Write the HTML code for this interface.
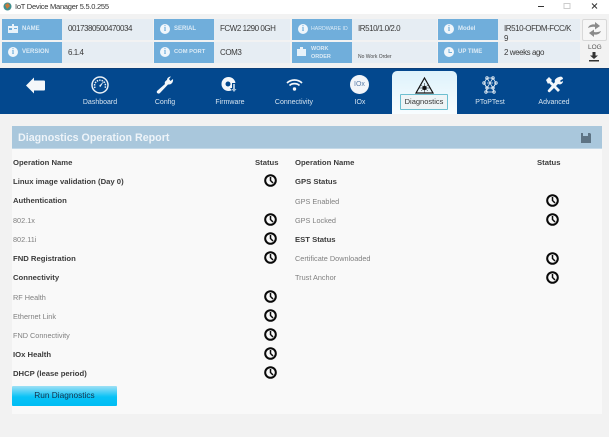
<!DOCTYPE html>
<html><head><meta charset="utf-8"><style>
html,body{margin:0;padding:0}
body{width:609px;height:437px;position:relative;overflow:hidden;background:#f2f2f2;font-family:"Liberation Sans",sans-serif;color:#333}
.a{position:absolute;white-space:nowrap}
.l{position:absolute;background:#70aedb;height:21px;width:60px}
.v{position:absolute;background:#e6edf3;height:21px}
.lt{position:absolute;color:#dcebf6;font-size:6px;font-weight:bold;white-space:nowrap}
.vt{position:absolute;color:#3a3a3a;font-size:8px;letter-spacing:-.45px;line-height:10px;white-space:nowrap}
.i{position:absolute;width:10px;height:10px;border-radius:50%;background:#f0f6fb;color:#70aedb;font:bold 8px/10px "Liberation Serif",serif;text-align:center}
.n{position:absolute;top:98px;width:70px;text-align:center;color:#d5e3ef;font-size:7px;line-height:9px}
.r{position:absolute;font-size:7.300px;line-height:10px;white-space:nowrap;color:#808080}
.b{color:#3c3c3c;font-weight:bold;font-size:7.700px}
svg{position:absolute;overflow:visible}
</style></head><body>
<div class="a" style="left:0;top:0;width:609px;height:14px;background:#fff"></div>
<svg style="left:3px;top:2px" width="9" height="9" viewBox="0 0 9 9"><circle cx="4.500" cy="4.500" r="4" fill="#3f8f8f"/><path d="M2 3l3-2 2 3-3 3z" fill="#c87a3a"/></svg>
<div class="a" style="left:15px;top:2px;font-size:7.500px;letter-spacing:-.25px;line-height:10px;color:#333">IoT Device Manager 5.5.0.255</div>
<svg style="left:538px;top:3px" width="62" height="9" viewBox="0 0 62 9"><path d="M0 3.500h6" stroke="#333" fill="none"/><rect x="26" y="0.500" width="6" height="5" fill="none" stroke="#ccc"/><path d="M54 0.500l5 5M59 0.500l-5 5" stroke="#333" fill="none"/></svg>

<div class="l" style="left:2px;top:19px"></div><div class="v" style="left:62px;top:19px;width:91px"></div>
<div class="l" style="left:154px;top:19px"></div><div class="v" style="left:214px;top:19px;width:76px"></div>
<div class="l" style="left:292px;top:19px"></div><div class="v" style="left:352px;top:19px;width:85px"></div>
<div class="l" style="left:438px;top:19px"></div><div class="v" style="left:498px;top:19px;width:82px"></div>
<div class="l" style="left:2px;top:42px"></div><div class="v" style="left:62px;top:42px;width:91px"></div>
<div class="l" style="left:154px;top:42px"></div><div class="v" style="left:214px;top:42px;width:76px"></div>
<div class="l" style="left:292px;top:42px"></div><div class="v" style="left:352px;top:42px;width:85px"></div>
<div class="l" style="left:438px;top:42px"></div><div class="v" style="left:498px;top:42px;width:82px"></div>

<svg style="left:8px;top:24px" width="10" height="9" viewBox="0 0 10 9"><path d="M0 2h10v7H0z" fill="#e8f2f9"/><path d="M4 0h2v3H4z" fill="#e8f2f9"/><path d="M1 4h3v2H1zM6 4h3v1H6z" fill="#70aedb"/></svg>
<div class="lt" style="left:22px;top:26px">NAME</div><div class="vt" style="left:68px;top:24px">0017380500470034</div>
<div class="i" style="left:160px;top:24px">i</div><div class="lt" style="left:174px;top:26px">SERIAL</div><div class="vt" style="left:220px;top:24px">FCW2 1290 0GH</div>
<div class="i" style="left:298px;top:24px">i</div><div class="lt" style="left:311px;top:26px;font-size:5.200px;font-weight:normal">HARDWARE ID</div><div class="vt" style="left:358px;top:24px">IR510/1.0/2.0</div>
<div class="i" style="left:444px;top:24px">i</div><div class="lt" style="left:458px;top:26px">Model</div><div class="vt" style="left:504px;top:24px">IR510-OFDM-FCC/K</div><div class="vt" style="left:504px;top:34px">9</div>
<div class="i" style="left:8px;top:47px">i</div><div class="lt" style="left:22px;top:49px">VERSION</div><div class="vt" style="left:68px;top:48px">6.1.4</div>
<div class="i" style="left:160px;top:47px">i</div><div class="lt" style="left:174px;top:49px;font-size:5.800px">COM PORT</div><div class="vt" style="left:220px;top:48px">COM3</div>
<svg style="left:297px;top:47px" width="9" height="9" viewBox="0 0 9 9"><path d="M0 2h9v7H0zM3 0h3v2H3z" fill="#e8f2f9"/></svg>
<div class="lt" style="left:311px;top:45px;font-size:5.500px;line-height:8px">WORK<br>ORDER</div><div class="a" style="left:358px;top:54px;font-size:5px;color:#444">No Work Order</div>
<svg style="left:444px;top:47px" width="10" height="10" viewBox="0 0 10 10"><circle cx="5" cy="5" r="5" fill="#f0f6fb"/><path d="M5 2v3.500h3" stroke="#70aedb" fill="none"/></svg>
<div class="lt" style="left:458px;top:49px">UP TIME</div><div class="vt" style="left:504px;top:48px">2 weeks ago</div>

<div class="a" style="left:582px;top:19px;width:23px;height:20px;border:1px solid #d8d8d8;border-radius:2px;background:#f6f6f6"></div>
<svg style="left:587px;top:22px" width="15" height="15" viewBox="0 0 15 15"><path d="M1 6C2 3 5 2 8 2.500V0l5 4-5 3.500V5C6 4.500 3 5 1 6zM14 9c-1 3-4 4-7 3.500V15l-5-4 5-3.500V10c2 .5 5 0 7-1z" fill="#8a8a8a"/></svg>
<div class="a" style="left:588px;top:44px;font-size:6.500px;line-height:8px;color:#555">LOG</div>
<svg style="left:588px;top:52px" width="12" height="10" viewBox="0 0 12 10"><path d="M4.500 0h3v3.500H10L6 7 2 3.500h2.500zM1 8h10v1.500H1z" fill="#333"/></svg>

<div class="a" style="left:0;top:68px;width:609px;height:46px;background:#03488e"></div>
<div class="a" style="left:0;top:68px;width:609px;height:1px;background:#0d3f78"></div>

<svg style="left:26px;top:77px" width="19" height="17" viewBox="0 0 19 17"><path d="M0 8.500L8 0.500v3h10q1 0 1 1v8q0 1-1 1H8v3z" fill="#f4f7fa"/></svg>
<svg style="left:91px;top:76px" width="18" height="18" viewBox="0 0 18 18"><circle cx="9" cy="9" r="8" fill="none" stroke="#e9f0f6" stroke-width="1.500"/><path d="M4 12A5.500 5.500 0 1 1 14 12" fill="none" stroke="#e9f0f6" stroke-width="1.500" stroke-dasharray="1.500 1"/><path d="M8 10l5-5-3.500 6z" fill="#e9f0f6"/></svg>
<svg style="left:156px;top:76px" width="18" height="19" viewBox="0 0 18 19"><path d="M11 4c0-2 2-3.500 4-3.500l-2 2.500 1.500 2L17 3c.5 3-1.500 6-5 5.500L4 17c-1.500 1.500-4 0-3-2l8-7c-.5-1-.5-2.500 2-4z" fill="#f4f7fa"/></svg>
<svg style="left:221px;top:76px" width="17" height="17" viewBox="0 0 17 17"><circle cx="7.500" cy="8" r="7" fill="#f4f7fa"/><circle cx="7" cy="8" r="2.500" fill="#03488e"/><path d="M11 7h4v5h2l-4 5-4-5h2z" fill="#03488e"/><path d="M12 8h2v5h1.500L13 16l-2.500-3H12z" fill="#a9c3db"/></svg>
<svg style="left:286px;top:78px" width="17" height="14" viewBox="0 0 17 14"><path d="M1 5c4-4 11-4 15 0M3.500 7.500c2.500-2.500 7.500-2.500 10 0" fill="none" stroke="#f4f7fa" stroke-width="1.700"/><circle cx="8.500" cy="11" r="1.700" fill="#f4f7fa"/></svg>
<div class="a" style="left:350px;top:75px;width:19px;height:19px;border-radius:50%;background:#f2f5f9;color:#5c7faa;font-size:7px;line-height:19px;text-align:center">IOx</div>

<div class="a" style="left:392px;top:71px;width:65px;height:43px;border-radius:5px 5px 0 0;background:linear-gradient(#ddf2fb,#f8fdff)"></div>
<svg style="left:415px;top:77px" width="19" height="17" viewBox="0 0 19 17"><path d="M9.500 1L18 16H1z" fill="none" stroke="#111" stroke-width="1.200"/><circle cx="9.500" cy="11" r="2.200" fill="#111"/><path d="M9.500 6v10M4 11h11M6 8l7 6M13 8l-7 6" stroke="#111" stroke-width=".5"/></svg>
<div class="a" style="left:400px;top:94px;width:46px;height:14px;border:1px solid #6dbfd0;background:#eef4f6;color:#333;font-size:7.500px;line-height:14px;text-align:center;border-radius:1px">Diagnostics</div>

<svg style="left:481px;top:76px" width="18" height="18" viewBox="0 0 18 18"><g fill="none" stroke="#dfe9f2" stroke-width=".8"><path d="M6 2h6l3 5-3 5H6L3 7z"/><path d="M6 7h6M6 2l3 5 3-5M6 12l3-5 3 5M3 7l3 5M15 7l-3 5M6 12l-1 4h8l-1-4"/><circle cx="6" cy="2" r="1.300"/><circle cx="12" cy="2" r="1.300"/><circle cx="3" cy="7" r="1.300"/><circle cx="15" cy="7" r="1.300"/><circle cx="6" cy="12" r="1.300"/><circle cx="12" cy="12" r="1.300"/><circle cx="5" cy="16" r="1.300"/><circle cx="13" cy="16" r="1.300"/></g></svg>
<svg style="left:546px;top:76px" width="17" height="17" viewBox="0 0 17 17"><path d="M3 1l3 3-1 1 9 9-2 2-9-9-1 1-2-4zM13 1c2-1 4 0 4 2l-2 1-1 1 1 1 2-1c0 3-3 4-5 3L4 16c-1 1-3-1-2-2l7-8c-1-2 1-4 4-5z" fill="#f4f7fa"/></svg>

<div class="n" style="left:65px">Dashboard</div>
<div class="n" style="left:130px">Config</div>
<div class="n" style="left:195px">Firmware</div>
<div class="n" style="left:259px">Connectivity</div>
<div class="n" style="left:325px">IOx</div>
<div class="n" style="left:455px">PToPTest</div>
<div class="n" style="left:519px">Advanced</div>

<div class="a" style="left:12px;top:126px;width:590px;height:288px;background:#f9f9f9"></div>
<div class="a" style="left:12px;top:126px;width:590px;height:23px;background:#a9c7dc;border-bottom:1px solid #c4d9e8;box-sizing:border-box"></div>
<div class="a" style="left:18px;top:132px;font-size:10.700px;line-height:13px;font-weight:bold;color:#eef4f9">Diagnostics Operation Report</div>
<svg style="left:581px;top:133px" width="10" height="10" viewBox="0 0 10 10"><path d="M0 0h2v3h5V0h2l1 1v9H0z" fill="#5d7384"/></svg>

<div class="r b" style="left:13px;top:158px">Operation Name</div><div class="r b" style="left:255px;top:158px">Status</div>
<div class="r b" style="left:13px;top:177px">Linux image validation (Day 0)</div>
<div class="r b" style="left:13px;top:196px">Authentication</div>
<div class="r" style="left:13px;top:216px">802.1x</div>
<div class="r" style="left:13px;top:235px">802.11i</div>
<div class="r b" style="left:13px;top:254px">FND Registration</div>
<div class="r b" style="left:13px;top:273px">Connectivity</div>
<div class="r" style="left:13px;top:293px">RF Health</div>
<div class="r" style="left:13px;top:312px">Ethernet Link</div>
<div class="r" style="left:13px;top:331px">FND Connectivity</div>
<div class="r b" style="left:13px;top:350px">IOx Health</div>
<div class="r b" style="left:13px;top:369px">DHCP (lease period)</div>

<div class="r b" style="left:295px;top:158px">Operation Name</div><div class="r b" style="left:537px;top:158px">Status</div>
<div class="r b" style="left:295px;top:177px">GPS Status</div>
<div class="r" style="left:295px;top:197px">GPS Enabled</div>
<div class="r" style="left:295px;top:216px">GPS Locked</div>
<div class="r b" style="left:295px;top:235px">EST Status</div>
<div class="r" style="left:295px;top:254px">Certificate Downloaded</div>
<div class="r" style="left:295px;top:273px">Trust Anchor</div>

<svg width="0" height="0" style="left:0;top:0"><defs><g id="c"><circle cx="6.500" cy="6.500" r="5.300" fill="none" stroke="#0a0a0a" stroke-width="2"/><path d="M6.500 3v3.500L9 9" fill="none" stroke="#0a0a0a" stroke-width="1.500"/></g></defs></svg>
<svg style="left:264px;top:174px" width="13" height="13"><use href="#c"/></svg>
<svg style="left:264px;top:213px" width="13" height="13"><use href="#c"/></svg>
<svg style="left:264px;top:232px" width="13" height="13"><use href="#c"/></svg>
<svg style="left:264px;top:251px" width="13" height="13"><use href="#c"/></svg>
<svg style="left:264px;top:290px" width="13" height="13"><use href="#c"/></svg>
<svg style="left:264px;top:309px" width="13" height="13"><use href="#c"/></svg>
<svg style="left:264px;top:328px" width="13" height="13"><use href="#c"/></svg>
<svg style="left:264px;top:347px" width="13" height="13"><use href="#c"/></svg>
<svg style="left:264px;top:366px" width="13" height="13"><use href="#c"/></svg>
<svg style="left:546px;top:194px" width="13" height="13"><use href="#c"/></svg>
<svg style="left:546px;top:213px" width="13" height="13"><use href="#c"/></svg>
<svg style="left:546px;top:252px" width="13" height="13"><use href="#c"/></svg>
<svg style="left:546px;top:271px" width="13" height="13"><use href="#c"/></svg>

<div class="a" style="left:12px;top:386px;width:105px;height:20px;background:linear-gradient(#9fe0f5,#08c2f6 55%,#00bdf4);border-radius:1px;color:#14304a;font-size:8.300px;line-height:19px;text-align:center">Run Diagnostics</div>
</body></html>
